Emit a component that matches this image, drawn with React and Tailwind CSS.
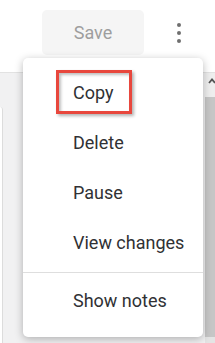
import React from "react";

function Item({ children, className = "" }) {
  return (
    <div className={`relative h-[50px] flex items-center pl-[50px] text-[18px] text-[#303134] ${className}`}>
      {children}
    </div>
  );
}

export default function App() {
  return (
    <div
      className="relative w-[215px] h-[343px] overflow-hidden bg-white flex flex-col"
      style={{ fontFamily: "Roboto, 'Liberation Sans', sans-serif" }}
    >
      {/* top bar */}
      <div className="h-[73px] shrink-0 flex items-start border-b border-[#e2e2e2] bg-white">
        <div className="ml-[42px] mt-[10px] w-[102px] h-[45px] rounded-[5px] bg-[#f5f5f5] flex items-center justify-center text-[18px] text-[#9e9e9e]">
          Save
        </div>
        <div className="ml-[33px] mt-[23px] flex flex-col items-center gap-[4px]">
          <span className="block w-[4px] h-[4px] rounded-full bg-[#6f6f6f]" />
          <span className="block w-[4px] h-[4px] rounded-full bg-[#6f6f6f]" />
          <span className="block w-[4px] h-[4px] rounded-full bg-[#6f6f6f]" />
        </div>
      </div>

      {/* content area */}
      <div className="flex-1 flex bg-[#f1f1f2]">
        <div className="w-[3px] mt-[34px] bg-white rounded-tr-[4px] border-r border-[#dcdcdc]" />
        <div className="flex-1" />
        <div className="w-[10px] flex flex-col">
          <div className="h-[24px] bg-[#eeeeee] flex items-start justify-end pt-[5px]">
            <svg width="8" height="6" viewBox="0 0 8 6" className="mr-[-1px]">
              <path d="M1 5 L4 1.5 L7 5" stroke="#555" strokeWidth="1.8" fill="none" />
            </svg>
          </div>
          <div className="h-[240px] bg-[#c6c6c6]" />
          <div className="flex-1 bg-[#e4e4e4]" />
        </div>
      </div>

      {/* dropdown menu */}
      <div className="absolute left-[23px] top-[58px] w-[180px] h-[279px] bg-white rounded-[5px] shadow-[0_2px_8px_rgba(0,0,0,0.28)] pt-[9px]">
        <Item>
          <div className="absolute left-[33px] top-[3px] w-[76px] h-[44px] border-[3px] border-[#e8473d] shadow-[2px_2px_3px_rgba(0,0,0,0.3),inset_2px_2px_3px_rgba(0,0,0,0.25)]" />
          <span className="relative">Copy</span>
        </Item>
        <Item>Delete</Item>
        <Item>Pause</Item>
        <Item>View changes</Item>
        <div className="mt-[5px] h-px bg-[#dedede]" />
        <Item className="mt-[2px]">Show notes</Item>
      </div>
    </div>
  );
}
